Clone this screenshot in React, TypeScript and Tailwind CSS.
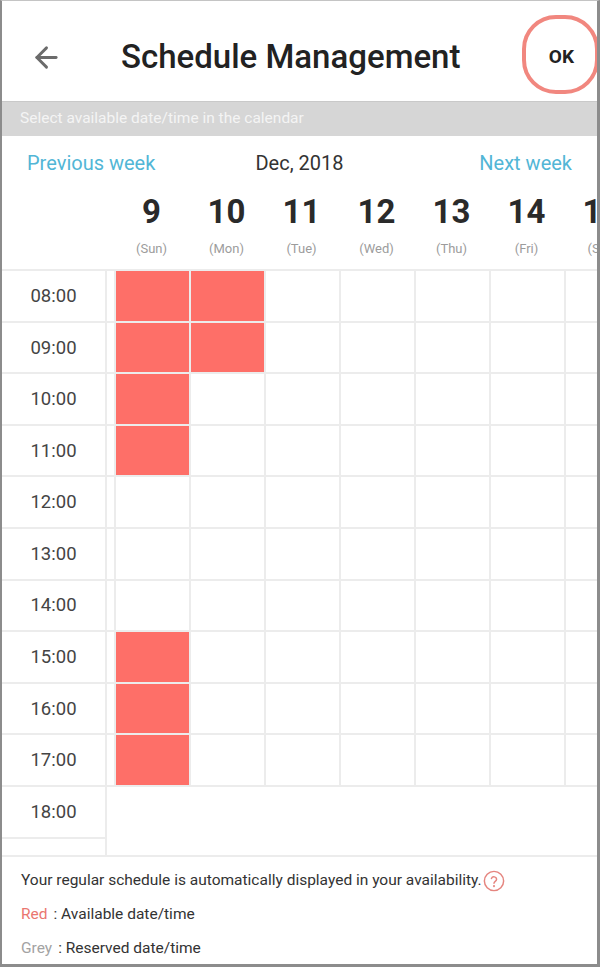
import { ArrowLeft } from 'lucide-react';

const days = [
  { date: 9, name: 'Sun' },
  { date: 10, name: 'Mon' },
  { date: 11, name: 'Tue' },
  { date: 12, name: 'Wed' },
  { date: 13, name: 'Thu' },
  { date: 14, name: 'Fri' },
  { date: 15, name: 'Sat' },
];

const hours = ['08:00', '09:00', '10:00', '11:00', '12:00', '13:00', '14:00', '15:00', '16:00', '17:00'];

// open slots keyed by day index -> hours
const available: Record<number, string[]> = {
  0: ['08:00', '09:00', '10:00', '11:00', '15:00', '16:00', '17:00'],
  1: ['08:00', '09:00'],
};

const isOpen = (day: number, hour: string) => (available[day] ?? []).includes(hour);

export default function App() {
  return (
    <div
      className="relative w-[600px] h-[967px] overflow-hidden bg-white border-t border-t-[#c4c4c4] border-l-2 border-r-[3px] border-b-[3px] border-l-[#8c8c8c] border-r-[#8c8c8c] border-b-[#8c8c8c] flex flex-col"
      style={{ fontFamily: 'Roboto, "Liberation Sans", sans-serif' }}
    >
      {/* top bar */}
      <header className="h-[101px] shrink-0 flex items-center pt-[12px] border-b border-[#c9c9c9]">
        <ArrowLeft className="ml-[28px] w-[33px] h-[33px] text-[#6b6b6b]" strokeWidth={2.1} />
        <h1 className="ml-[58px] text-[33px] font-medium text-[#222]">Schedule Management</h1>
        <button className="ml-auto mr-[23px] text-[19px] font-bold text-[#222]">OK</button>
      </header>
      <div className="absolute left-[520px] top-[14px] w-[77px] h-[79px] rounded-[34px] border-[4px] border-[#f1877f]" />

      <div className="h-[34px] shrink-0 bg-[#d6d6d6] flex items-center pl-[18px] text-[15.5px] text-[#f4f4f4]">
        Select available date/time in the calendar
      </div>

      {/* week navigation */}
      <div className="h-[54px] shrink-0 grid grid-cols-[1fr_auto_1fr] items-center px-[25px] text-[20px]">
        <span className="text-[#52b6d6]">Previous week</span>
        <span className="text-[#333]">Dec, 2018</span>
        <span className="text-right text-[#52b6d6]">Next week</span>
      </div>

      {/* day headers */}
      <div className="h-[79px] shrink-0 flex">
        <div className="w-[112px] shrink-0" />
        {days.map((d) => (
          <div key={d.date} className="w-[75px] shrink-0 flex flex-col items-center pt-[5px]">
            <span className="text-[33px] leading-none font-bold text-[#2a2a2a]">{d.date}</span>
            <span className="mt-[14px] text-[13px] leading-none text-[#9c9c9c]">({d.name})</span>
          </div>
        ))}
      </div>

      {/* time grid */}
      <div className="shrink-0 border-t-2 border-[#ececec]">
        {hours.map((h) => (
          <div key={h} className="h-[51.6px] flex border-b-2 border-[#ececec]">
            <div className="w-[105px] shrink-0 border-r-2 border-[#ececec] flex items-center justify-center pt-[2px] text-[18.5px] text-[#444]">
              {h}
            </div>
            <div className="w-[7px] shrink-0" />
            {days.map((d, i) => (
              <div key={d.date} className="w-[75px] shrink-0 border-l-2 border-[#ececec]">
                {isOpen(i, h) && <div className="w-full h-full bg-[#fe6f68]" />}
              </div>
            ))}
          </div>
        ))}
        <div className="h-[51.6px] flex">
          <div className="w-[105px] shrink-0 border-r-2 border-b-2 border-[#ececec] flex items-center justify-center pt-[2px] text-[18.5px] text-[#444]">
            18:00
          </div>
        </div>
        <div className="h-[18px] flex border-b-2 border-[#ececec]">
          <div className="w-[105px] shrink-0 border-r-2 border-[#ececec]" />
        </div>
      </div>

      {/* legend */}
      <div className="flex-1 pl-[19px] pt-[7px] text-[15.5px] text-[#333]">
        <p className="h-[34px] flex items-center">
          Your regular schedule is automatically displayed in your availability.
          <svg viewBox="0 0 24 24" className="ml-[1px] w-[22px] h-[22px]" fill="none" stroke="#e5857f" strokeWidth={1.6}>
            <circle cx="12" cy="12" r="10.5" />
            <path d="M9.2 9.3a2.9 2.9 0 0 1 5.6 1c0 1.9-2.8 2.3-2.8 4.1" strokeLinecap="round" />
            <circle cx="12" cy="17.6" r="0.4" fill="#e5857f" />
          </svg>
        </p>
        <p className="h-[34px] flex items-center">
          <span className="text-[#ea7670]">Red</span>
          <span className="ml-[6px]">: Available date/time</span>
        </p>
        <p className="h-[34px] flex items-center">
          <span className="text-[#a3a3a3]">Grey</span>
          <span className="ml-[6px]">: Reserved date/time</span>
        </p>
      </div>
    </div>
  );
}
